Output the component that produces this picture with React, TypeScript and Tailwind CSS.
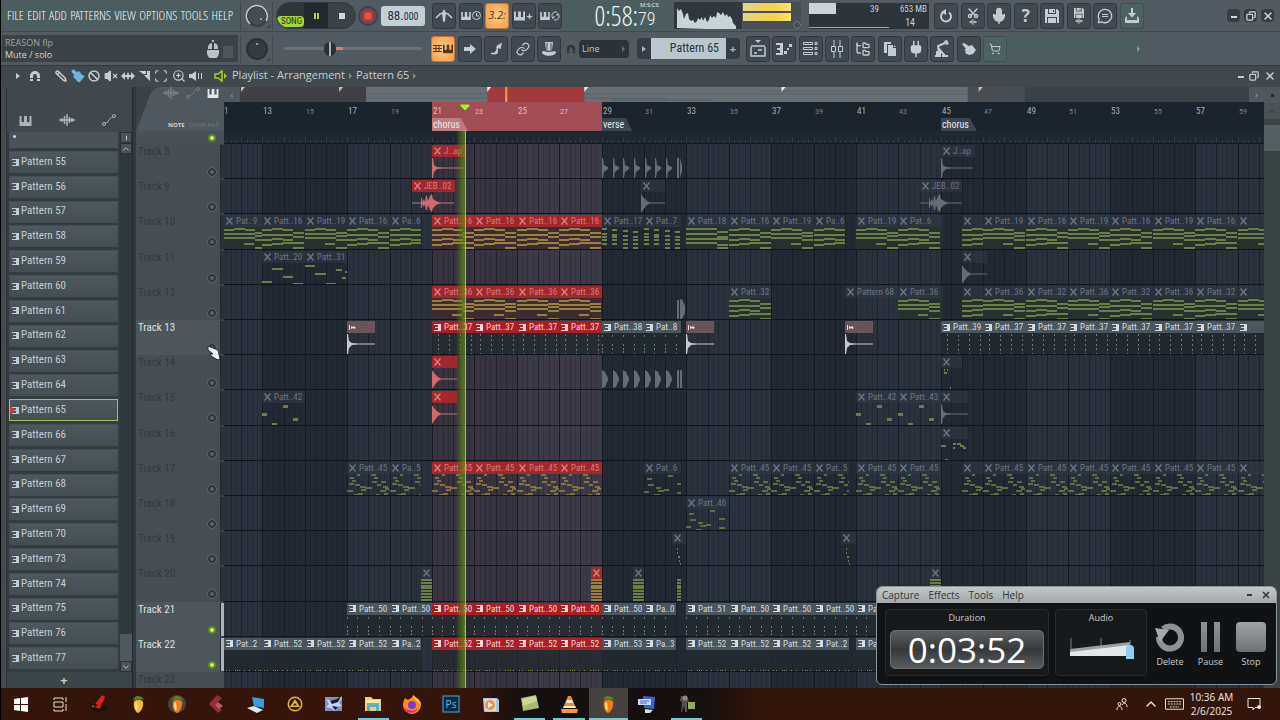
import type { ReactNode } from "react";
import clsx from "clsx";
import {
  Ban,
  ChevronUp,
  Copy,
  FolderTree,
  Link,
  MessageCircle,
  Mic,
  Paintbrush,
  Pencil,
  Plug,
  Scan,
  Scissors,
  ShoppingCart,
  VolumeX,
  X,
  ZoomIn,
} from "lucide-react";

const NARROW = "font-['Roboto_Condensed','Open_Sans',sans-serif]";
const LCD = "font-['Open_Sans_Condensed_Light','Roboto_Condensed','Open_Sans',sans-serif]";

// timeline scale: five bars take 106px, the canvas starts just after bar 11
const FIRST_BAR = 11;
const barX = (bar: number) => Math.round(((bar - FIRST_BAR) * 106) / 5 - 4);

type Note = [x: number, y: number, w: number];
type Art =
  | "chordA"
  | "chordB"
  | "chordLong"
  | "stutter"
  | "melodyA"
  | "melodyB"
  | "sparse"
  | "arp"
  | "arpThin"
  | "dots"
  | "dotsLate"
  | "ticks"
  | "stripes"
  | "kick"
  | "snare"
  | "burst"
  | "hits"
  | "bigHits"
  | "blob"
  | "fall"
  | "specks"
  | "curve"
  | "none";

interface ClipData {
  from: number;
  to: number;
  name: string;
  art: Art;
  red?: boolean;
  bare?: boolean;
  audio?: boolean;
}

const NOTES: Partial<Record<Art, Note[]>> = {
  chordA: [
    [0, 2, 10], [10, 1, 11], [21, 2, 10], [31, 5, 11],
    [0, 7, 31], [31, 9, 11],
    [0, 12, 10], [10, 11, 11], [21, 12, 10], [31, 15, 11],
    [0, 17, 10], [10, 16, 11], [20, 15, 22],
    [31, 20, 11],
  ],
  chordB: [
    [0, 2, 10], [10, 1, 11], [21, 2, 10], [31, 5, 11],
    [0, 6, 31], [31, 8, 11],
    [0, 10, 31], [31, 12, 11],
    [20, 16, 10], [31, 20, 11],
  ],
  chordLong: [
    [0, 1, 31], [31, 4, 11], [0, 6, 31], [31, 9, 11],
    [0, 11, 42], [0, 15, 31], [31, 17, 11], [31, 20, 11],
  ],
  stutter: [0, 10, 21, 31].flatMap((x, i): Note[] => [
    [x, 1 + i, 5], [x, 6 + i, 5], [x, 12, 5], [x, 16, 5], [x, i > 1 ? 20 : 9, 5],
  ]),
  melodyA: [[0, 18, 10], [10, 5, 11], [21, 13, 10], [31, 20, 10]],
  melodyB: [[0, 2, 10], [10, 10, 11], [21, 20, 10], [31, 6, 6], [37, 14, 4], [40, 8, 2]],
  sparse: [[0, 10, 5], [10, 20, 5], [21, 2, 5], [31, 15, 5]],
  arp: [
    [3, 3, 4], [10, 0, 3], [5, 6, 4], [2, 9, 5], [8, 10, 5], [0, 16, 6], [13, 12, 6],
    [14, 15, 5], [18, 13, 7], [11, 19, 5], [7, 20, 5], [24, 0, 5], [27, 3, 4], [25, 7, 5],
    [30, 10, 4], [34, 7, 5], [36, 12, 5], [33, 16, 6], [38, 14, 4], [29, 20, 4], [37, 19, 4],
  ],
  arpThin: [
    [3, 4, 5], [24, 1, 5], [4, 10, 6], [12, 13, 5], [33, 9, 6], [14, 16, 6], [20, 15, 5],
    [0, 17, 5], [33, 18, 6], [10, 20, 6],
  ],
  dots: [6, 17, 28, 39].flatMap((x, i): Note[] => [
    [x, 1 + (i % 2), 1], [x, 6, 1], [x, 11, 1], [x, 15 + (i % 2), 1], [x, 20, 1],
  ]),
  dotsLate: [0, 10, 21, 32].flatMap((x, i): Note[] => [
    [x, 2, 1], [x, 11, 1], [x, 15, 1], [x, i % 2 ? 20 : 18, 1],
  ]),
  ticks: [2, 5, 11, 13, 15, 20, 25, 31, 34, 36, 39].map((x): Note => [x, 20, 1]),
  stripes: [0, 3, 6, 8, 11, 14, 17, 20].map((y): Note => [0, y, 11]),
  fall: [[5, 4, 1], [5, 8, 1], [6, 12, 2], [7, 16, 1], [8, 19, 1], [8, 20, 1]],
  specks: [[3, 1, 1], [6, 1, 1], [3, 4, 3], [9, 19, 1]],
  curve: [[0, 6, 5], [12, 4, 3], [12, 8, 2], [16, 4, 4], [19, 6, 4], [22, 8, 3], [4, 20, 3]],
};

const SHAPES: Partial<Record<Art, string>> = {
  kick: "M0 1L1 1L2 8L5 10L11 10.500H32V11.500H11L5 12L2 15L1 21L0 21Z",
  snare: "M0 2L2 5L6 9L9 10.500H26V11.500H9L6 13L2 18L0 21Z",
  burst: "M0 10.500H9V6H10V10L12 7L13 10L14 4H15L16 9L18 4L20 2L21 7L24 9L28 10.500H42V11.500H28L24 13L21 16L20 20L18 18L16 13L15 18H14L13 12L12 15L10 12V16H9V11.500H0Z",
  blob: "M3 2L5 1L8 8L8 15L5 21L3 21ZM0 2H2V21H0Z",
  hits: [0, 11, 21, 32, 43, 53, 64]
    .map((x) => `M${x} 1H${x + 1}L${x + 2} 8L${x + 6} 10V12L${x + 2} 15L${x + 1} 21H${x}Z`)
    .join("")
    .concat("M75 1H77V21H75ZM78 1L80 9V14L78 21Z"),
  bigHits: [0, 11, 21, 32, 43, 53, 64]
    .map((x) => `M${x} 2L${x + 3} 4L${x + 6} 10V12L${x + 3} 19L${x} 20Z`)
    .join("")
    .concat("M75 2H77V20H75ZM78 2H80V20H78Z"),
};

const run = (from: number, names: string[], art: Art | Art[], red = false): ClipData[] =>
  names.map((name, i) => ({
    from: from + i * 2,
    to: from + i * 2 + 2,
    name,
    art: Array.isArray(art) ? art[i % art.length] : art,
    red,
  }));

const same = (name: string, count: number) => Array.from({ length: count }, () => name);
const clip = (from: number, to: number, name: string, art: Art, extra: Partial<ClipData> = {}): ClipData => ({
  from,
  to,
  name,
  art,
  ...extra,
});

interface Track {
  id: number;
  on?: boolean;
  led?: boolean;
  clips: ClipData[];
}

const TRACKS: Track[] = [
  {
    id: 8,
    clips: [
      clip(21, 22.6, "J..ap", "kick", { red: true }),
      clip(29, 32.8, "", "hits", { bare: true }),
      clip(45, 46.6, "J..ap", "kick"),
    ],
  },
  {
    id: 9,
    clips: [
      clip(20.05, 22.1, "JEB..02", "burst", { red: true }),
      clip(30.85, 32, "", "snare"),
      clip(44, 46, "JEB..02", "burst"),
    ],
  },
  {
    id: 10,
    clips: [
      clip(11.18, 13, "Pat..9", "chordB"),
      ...run(13, ["Patt..16", "Patt..19", "Patt..16"], ["chordA", "chordB"]),
      clip(19, 20.5, "Pa..6", "chordA"),
      ...run(21, same("Patt..16", 4), "chordA", true),
      clip(29, 31, "Patt..17", "stutter"),
      clip(31, 32.75, "Pat..7", "stutter"),
      clip(33, 35, "Patt..18", "chordLong"),
      ...run(35, ["Patt..16", "Patt..19"], ["chordA", "chordB"]),
      clip(39, 40.5, "Pa..6", "chordA"),
      clip(41, 43, "Patt..19", "chordB"),
      clip(43, 45.1, "Pat..6", "chordA"),
      clip(46, 47, "", "chordA"),
      ...run(47, ["Patt..19", "Patt..16", "Patt..19", "Patt..16", "Patt..19", "Patt..16"], ["chordB", "chordA"]),
      clip(59, 61, "", "chordB"),
    ],
  },
  {
    id: 11,
    clips: [
      clip(13, 15, "Patt..20", "melodyA"),
      clip(15, 17, "Patt..31", "melodyB"),
      clip(46, 47.2, "", "snare"),
    ],
  },
  {
    id: 12,
    clips: [
      ...run(21, same("Patt..36", 4), "chordB", true),
      clip(32.55, 33, "", "blob", { bare: true }),
      clip(35, 37, "Patt..32", "chordA"),
      clip(40.5, 43, "Pattern 68", "none"),
      clip(43, 45.1, "Patt..36", "chordB"),
      clip(46, 47, "", "chordA"),
      ...run(47, ["Patt..36", "Patt..32", "Patt..36", "Patt..32", "Patt..36", "Patt..32"], ["chordB", "chordA"]),
      clip(59, 61, "", "chordB"),
    ],
  },
  {
    id: 13,
    on: true,
    clips: [
      clip(17, 18.3, "", "kick", { audio: true }),
      ...run(21, same("Patt..37", 4), "dots", true),
      clip(29, 31, "Patt..38", "dotsLate"),
      clip(31, 32.75, "Pat..8", "dotsLate"),
      clip(33, 34.3, "", "kick", { audio: true }),
      clip(40.5, 41.8, "", "kick", { audio: true }),
      ...run(45, ["Patt..39", ...same("Patt..37", 6)], "dots"),
      clip(59, 61, "", "dots"),
    ],
  },
  {
    id: 14,
    clips: [
      clip(21, 22.2, "", "snare", { red: true }),
      clip(29, 32.8, "", "bigHits", { bare: true }),
      clip(45, 46, "", "specks"),
    ],
  },
  {
    id: 15,
    clips: [
      clip(13, 15, "Patt..42", "sparse"),
      clip(21, 22.2, "", "snare", { red: true }),
      ...run(41, ["Patt..42", "Patt..43"], "sparse"),
      clip(45, 46.3, "", "kick"),
    ],
  },
  { id: 16, clips: [clip(45, 46.3, "", "curve")] },
  {
    id: 17,
    clips: [
      clip(17, 19, "Patt..45", "arp"),
      clip(19, 20.5, "Pa..5", "arp"),
      ...run(21, same("Patt..45", 4), "arp", true),
      clip(31, 32.75, "Pat..6", "arpThin"),
      ...run(35, same("Patt..45", 2), "arp"),
      clip(39, 40.65, "Pat..5", "arp"),
      ...run(41, same("Patt..45", 2), "arp"),
      clip(46, 47, "", "arp"),
      ...run(47, same("Patt..45", 6), "arp"),
      clip(59, 61, "", "arp"),
    ],
  },
  { id: 18, clips: [clip(33, 35, "Patt..46", "arpThin")] },
  { id: 19, clips: [clip(32.3, 33, "", "fall"), clip(40.3, 41, "", "fall")] },
  {
    id: 20,
    clips: [
      clip(20.5, 21, "", "stripes"),
      clip(28.5, 29, "", "stripes", { red: true }),
      clip(30.5, 31, "", "stripes"),
      clip(32.55, 32.75, "", "stripes", { bare: true }),
      clip(44.5, 45, "", "stripes"),
    ],
  },
  {
    id: 21,
    on: true,
    led: true,
    clips: [
      ...run(17, same("Patt..50", 2), "dotsLate"),
      ...run(21, same("Patt..50", 4), "dotsLate", true),
      clip(29, 31, "Patt..50", "dotsLate"),
      clip(31, 32.5, "Pa..0", "dotsLate"),
      ...run(33, ["Patt..51", ...same("Patt..50", 4)], "dotsLate"),
    ],
  },
  {
    id: 22,
    on: true,
    led: true,
    clips: [
      clip(11.18, 13, "Pat..2", "ticks"),
      ...run(13, same("Patt..52", 3), "ticks"),
      clip(19, 20.5, "Pa..2", "ticks"),
      ...run(21, same("Patt..52", 4), "ticks", true),
      clip(29, 31, "Patt..53", "ticks"),
      clip(31, 32.5, "Pa..3", "ticks"),
      ...run(33, same("Patt..52", 3), "ticks"),
      clip(39, 40.65, "Pat..2", "ticks"),
      clip(41, 43, "Patt..52", "ticks"),
    ],
  },
];

const PATTERNS = [55, 56, 57, 58, 59, 60, 61, 62, 63, 64, 65, 66, 67, 68, 69, 70, 73, 74, 75, 76, 77];

function PianoIcon({ className = "h-2.5 w-3" }: { className?: string }) {
  return (
    <svg viewBox="0 0 12 10" className={className} fill="currentColor" aria-hidden>
      <path d="M0 0h2v6h2.500V0h3v6H10V0h2v10H0z" />
    </svg>
  );
}

function MagnetIcon({ className }: { className?: string }) {
  return (
    <svg viewBox="0 0 12 12" className={clsx("shrink-0", className)} fill="none" stroke="currentColor" strokeWidth="3" aria-hidden>
      <path d="M2.500 8V6a3.500 3.500 0 0 1 7 0v2" />
      <path d="M2.500 9v2M9.500 9v2" />
    </svg>
  );
}

function WaveIcon({ className = "h-3 w-4" }: { className?: string }) {
  return (
    <svg viewBox="0 0 16 12" className={className} stroke="currentColor" strokeWidth="1.500" aria-hidden>
      <path d="M0 6h16M3 4v4M5.500 2v8M8 0v12M10.500 3v6M13 4v4" fill="none" />
    </svg>
  );
}

function AutomationIcon() {
  return (
    <svg viewBox="0 0 14 12" className="h-3 w-3.5" fill="none" stroke="currentColor" aria-hidden>
      <path d="M3 9c3 0 3-2 4-3s2-3 4-3" />
      <circle cx="2" cy="10" r="1.500" />
      <circle cx="12" cy="2" r="1.500" />
    </svg>
  );
}

function StepIcon() {
  return (
    <svg viewBox="0 0 7 7" className="size-[7px] shrink-0" fill="currentColor" aria-hidden>
      <path d="M0 0h7v7H0V6h4V4H1V3h3V1H0z" />
    </svg>
  );
}

function MutedIcon() {
  return (
    <svg viewBox="0 0 7 8" className="h-2 w-[7px] shrink-0" fill="none" stroke="currentColor" strokeWidth="1.500" aria-hidden>
      <path d="M.5.5l6 7M6.500.5l-6 7" />
    </svg>
  );
}

function SpeakerIcon({ className }: { className?: string }) {
  return (
    <svg viewBox="0 0 14 12" className={clsx("h-3 w-3.5", className)} fill="none" stroke="currentColor" strokeWidth="1.500" aria-hidden>
      <path d="M1 4h3l4-3v10L4 8H1z" />
      <path d="M10 3l3 3-3 3z" fill="currentColor" stroke="none" />
    </svg>
  );
}

function SaveGlyph({ className }: { className: string }) {
  return (
    <svg viewBox="0 0 14 14" className={className} fill="currentColor" aria-hidden>
      <path fillRule="evenodd" d="M0 0h3v5h8V0h1l2 2v12h-2V8H2v6H0zM4 0h6v4H4zM8 1v2h1V1zM3 9h8v5H3z" />
    </svg>
  );
}

function WindowGlyph({ label }: { label: string }) {
  if (label === "Minimize") return <span className="mt-0.5 block h-0.5 w-1.5 bg-current" />;
  if (label === "Restore") return <Copy className="size-2.5 -scale-x-100" strokeWidth={3} />;
  return <X className="size-3" strokeWidth={3} />;
}

function ToolButton({ label, tone = "dark", children }: { label: string; tone?: "dark" | "amber" | "teal"; children: ReactNode }) {
  return (
    <button
      type="button"
      aria-label={label}
      className={clsx(
        "flex h-[26px] w-6 shrink-0 items-center justify-center gap-px rounded-[3px] border",
        tone === "dark" && "border-[#30373e] bg-[#404850] text-[#c3ccd2]",
        tone === "amber" && "border-[#c07a35] bg-[radial-gradient(#ffcd8a,#f59c45)] text-[#5b3410]",
        tone === "teal" && "border-[#3f4e50] bg-[#4d6264] text-[#c3ccd2]",
      )}
    >
      {children}
    </button>
  );
}

function Knob({ lit }: { lit?: boolean }) {
  return (
    <svg viewBox="0 0 28 28" className="size-7" aria-hidden>
      <circle cx="14" cy="14" r="10" fill={lit ? "#454c53" : "#353b41"} stroke={lit ? "#363d43" : "#2a3036"} strokeWidth="2" />
      {lit && <path d="M7 22A10.500 10.500 0 1 1 23 19" fill="none" stroke="#c3ccd1" strokeWidth="1.500" />}
      <circle cx={lit ? 18 : 14} cy={lit ? 17 : 9} r="1" fill="#aab3b8" />
      <path d="M24 25h3v-2" fill="none" stroke="#343b41" />
    </svg>
  );
}

function TransportRow() {
  return (
    <div className="flex h-8 items-center border-b border-[#424950]">
      <nav className={clsx(LCD, "mr-0.5 ml-px flex h-[27px] w-[236px] shrink-0 items-center justify-between bg-[#4b5d5f] px-[5px] text-[13px] text-[#f0f6f6]")}>
        {["FILE", "EDIT", "ADD", "PATTERNS", "VIEW", "OPTIONS", "TOOLS", "HELP"].map((item) => (
          <button key={item} type="button">
            {item}
          </button>
        ))}
      </nav>
      <div className="flex w-[33px] shrink-0 justify-center border-x border-[#424950]">
        <Knob lit />
      </div>
      <div className="ml-[3px] flex h-[27px] w-20 shrink-0 overflow-hidden rounded-full border border-[#33393f] bg-[#3a4147]">
        <button type="button" className="flex w-[27px] flex-col justify-end bg-[#30373c]">
          <span className={clsx(NARROW, "mb-px rounded-sm bg-[#a5d63a] pl-0.5 text-center text-[9px] leading-[11px] text-[#22300a]")}>SONG</span>
        </button>
        <button type="button" aria-label="Pause playback" className="flex w-6 items-center justify-center gap-px bg-[#23292e]">
          <span className="h-1.5 w-0.5 bg-[#a5d63a]" />
          <span className="h-1.5 w-0.5 bg-[#a5d63a]" />
        </button>
        <button type="button" aria-label="Stop playback" className="flex flex-1 items-center justify-center">
          <span className="size-1.5 bg-[#d1d8dc]" />
        </button>
      </div>
      <button type="button" aria-label="Record" className="ml-0.5 flex size-5 shrink-0 items-center justify-center rounded-full border-2 border-[#3b4248] bg-[#79484d]">
        <span className="size-2 rounded-full bg-[#ee4a4c]" />
      </button>
      <div className={clsx(NARROW, "ml-[3px] flex h-5 w-[44px] shrink-0 items-baseline justify-center rounded-[3px] bg-[#c3cfd7] text-[13px] leading-5 text-[#2b3337]")}>
        88.<span className="text-[10px]">000</span>
      </div>
      <div className="ml-[7px] flex w-[130px] shrink-0 justify-between">
        <ToolButton label="Metronome">
          <svg viewBox="0 0 18 14" className="h-3.5 w-[18px]" fill="none" stroke="currentColor" strokeWidth="1.500">
            <path d="M1 9l4-4 3-1M17 9l-4-4-3-1M9 3v10" />
            <path d="M9 0l2 4-1 8H8L7 4z" fill="currentColor" stroke="none" />
          </svg>
        </ToolButton>
        <ToolButton label="Wait for input">
          <PianoIcon className="h-2 w-2.5" />
          <svg viewBox="0 0 9 9" className="size-[9px]" fill="none" stroke="currentColor">
            <circle cx="4.500" cy="4.500" r="4" />
            <path d="M4.500 2v3H7" />
          </svg>
        </ToolButton>
        <ToolButton label="Countdown" tone="amber">
          <span className="font-['Open_Sans',sans-serif] text-[11px] italic">3.2:</span>
        </ToolButton>
        <ToolButton label="Overdub">
          <PianoIcon className="h-2.5 w-[11px]" />
          <span className="text-[11px] leading-none font-bold">+</span>
        </ToolButton>
        <ToolButton label="Loop record">
          <PianoIcon className="h-2 w-2.5" />
          <svg viewBox="0 0 9 10" className="h-2.5 w-[9px]" fill="none" stroke="currentColor">
            <path d="M6 1H4a3.500 3.500 0 0 0-2 6M3 9h2a3.500 3.500 0 0 0 2-6M1 7h2v-2M8 3H6v2" />
          </svg>
        </ToolButton>
      </div>
      <div className={clsx(LCD, "ml-1 flex h-[27px] w-[103px] shrink-0 items-center justify-end bg-[#4b5d5f] pr-[3px] text-[#e6f3f4]")}>
        <span className="text-[27px] leading-[27px]">0:58:</span>
        <span className="flex w-7 flex-col items-start">
          <span className="pl-0.5 font-['Open_Sans',sans-serif] text-[6px] leading-[6px]">M:S:CS</span>
          <span className={clsx(NARROW, "text-[18px] leading-[21px] font-light")}>79</span>
        </span>
      </div>
      <svg viewBox="0 0 68 27" className="ml-[5px] h-[27px] w-[68px] shrink-0 bg-[#30373d]" aria-hidden>
        <path
          d="M3 26V6l2 3 2-2 2 5 1 5 2-5 2-1 1 6 2 2 2-1 2 3 2-2 1-3 2 2 2-3 1 4 2-4 2 5 2-2 1-5 2 3 2-2 2 2 1-6 2 1 2 2 2-3 2 4 2-2 1 3 2-1 2 3 1 4 3 3v4z"
          fill="#c9d3da"
        />
      </svg>
      <div className="relative ml-px flex h-[27px] w-[58px] shrink-0 flex-col gap-0.5 bg-[#474e55]">
        <span className="mt-px h-2 w-12 bg-[linear-gradient(90deg,#e0d58d,#f1d04a_60%,#fbe36a)]" />
        <span className="h-2 w-12 bg-[linear-gradient(90deg,#e0d58d,#f1d04a_60%,#fbe36a)]" />
        <span className="absolute right-0 bottom-0 size-2 rounded-full border border-[#6f7980]" />
      </div>
      <div className={clsx(NARROW, "ml-2 flex h-[26px] w-[120px] shrink-0 justify-between bg-[#2e353a] pr-0.5 text-[9px] leading-[13px] text-[#c5cfd4]")}>
        <span className="flex h-full w-10 flex-col justify-between">
          <span className="h-[11px] w-[27px] bg-[#c9d3d9]" />
          <span className="mb-px h-px w-20 bg-[#9aa4a9]" />
        </span>
        <span>39</span>
        <span className="flex flex-col text-right">
          <span>653 MB</span>
          <span className="pr-3 text-[10px]">14</span>
        </span>
      </div>
      <div className="ml-[5px] flex w-[210px] shrink-0 justify-between">
        <ToolButton label="Undo">
          <svg viewBox="0 0 14 14" className="size-3.5" fill="none" stroke="currentColor" strokeWidth="2">
            <path d="M4 3.500a5 5 0 1 0 6 0" />
            <path d="M7 0L2 3l5 3z" fill="currentColor" stroke="none" />
          </svg>
        </ToolButton>
        <ToolButton label="Cut">
          <span className="flex flex-col items-center">
            <Scissors className="size-3 -rotate-90" strokeWidth={3} />
            <WaveIcon className="h-1.5 w-3" />
          </span>
        </ToolButton>
        <ToolButton label="Record audio">
          <Mic className="size-[18px] fill-current" />
        </ToolButton>
        <ToolButton label="Help">
          <span className="font-['Open_Sans',sans-serif] text-[17px] leading-none font-bold">?</span>
        </ToolButton>
        <ToolButton label="Save">
          <SaveGlyph className="size-3.5" />
        </ToolButton>
        <ToolButton label="Save new version">
          <span className="flex flex-col items-center">
            <SaveGlyph className="size-2.5" />
            <WaveIcon className="h-1.5 w-3" />
          </span>
        </ToolButton>
        <ToolButton label="Feedback">
          <span className="relative flex items-center justify-center">
            <MessageCircle className="size-4" />
            <span className="absolute h-[3px] w-1.5 border-y border-current" />
          </span>
        </ToolButton>
        <ToolButton label="Download" tone="teal">
          <svg viewBox="0 0 16 16" className="size-4" fill="currentColor">
            <path d="M7 0h2v5h3L8 9.500 4 5h3zM1 10l2-2v4h10V8l2 2v5H1z" />
          </svg>
        </ToolButton>
      </div>
      <div className="mr-[6px] ml-auto flex gap-1">
        {["Minimize", "Restore", "Close"].map((label) => (
          <button
            key={label}
            type="button"
            aria-label={label}
            className="flex size-[13px] items-center justify-center rounded-sm bg-[#363d44] text-[#cfd7db]"
          >
            <WindowGlyph label={label} />
          </button>
        ))}
      </div>
    </div>
  );
}

function PanelRow() {
  return (
    <div className="flex h-[33px] items-center">
      <div className="mr-0.5 ml-px flex h-[27px] w-[236px] shrink-0 items-center justify-between bg-[#3a4246] px-[3px] font-['Open_Sans',sans-serif] text-[9px] leading-[12px]">
        <div>
          <p className="text-[#9ba7ab]">REASON flp</p>
          <p className="text-[#cfd9dc]">Mute / solo</p>
        </div>
        <div className="flex items-end gap-1 pr-0.5">
          <svg viewBox="0 0 12 18" className="h-[18px] w-3" fill="#b9c3c7" aria-hidden>
            <path d="M1 8a5 5 0 0 1 4-5V9H1zM7 3a5 5 0 0 1 4 5v1H7zM0 10h12v3a5 5 0 0 1-12 0zM5 0h2v2H5z" />
          </svg>
          <span className="h-3 w-2.5 bg-[#4e565b]" />
        </div>
      </div>
      <div className="flex w-[33px] shrink-0 justify-center border-x border-[#424950]">
        <Knob />
      </div>
      <div className="ml-[11px] flex w-[138px] shrink-0 items-center">
        <input
          type="range"
          aria-label="Master pitch"
          defaultValue={32}
          className="h-[3px] w-full appearance-none rounded-full bg-[linear-gradient(90deg,#6a7278_0_38%,#e07b76_38%_43%,#6a7278_43%)] [&::-webkit-slider-thumb]:h-3.5 [&::-webkit-slider-thumb]:w-3 [&::-webkit-slider-thumb]:appearance-none [&::-webkit-slider-thumb]:rounded-full [&::-webkit-slider-thumb]:bg-[linear-gradient(90deg,#2b3035_0_5px,#aab0b4_5px_7px,#2b3035_7px)]"
        />
      </div>
      <div className="ml-[9px] flex w-[130px] shrink-0 justify-between">
        <ToolButton label="Typing keyboard" tone="amber">
          <svg viewBox="0 0 9 10" className="h-2.5 w-[9px]" fill="none" stroke="currentColor">
            <path d="M0 1.500h9M0 4.500h9M0 7.500h9M3 1v7M6 1v7" />
          </svg>
          <PianoIcon className="h-2.5 w-2.5" />
        </ToolButton>
        <ToolButton label="Step mode">
          <svg viewBox="0 0 12 10" className="h-2.5 w-3" fill="currentColor">
            <path d="M0 3h6V0l6 5-6 5V7H0z" />
          </svg>
        </ToolButton>
        <ToolButton label="Slide">
          <svg viewBox="0 0 12 12" className="size-3" fill="none" stroke="currentColor" strokeWidth="1.500">
            <path d="M9 2c-3 1 0 5-4 8M1 10.500h3" />
            <path d="M7 4l4-3-1 4zM4 11l3-3v2z" fill="currentColor" />
          </svg>
        </ToolButton>
        <ToolButton label="Link">
          <Link className="size-3.5" />
        </ToolButton>
        <ToolButton label="Hat">
          <svg viewBox="0 0 16 16" className="size-4" fill="currentColor">
            <path d="M4 1h8l-1 8c-2 1-4 1-6 0zM1 11c2-2 2 0 7 0s5-2 7 0c0 5-14 5-14 0z" />
            <path d="M6 2v7M10 2v7" stroke="#404850" />
          </svg>
        </ToolButton>
      </div>
      <MagnetIcon className="ml-[5px] size-2.5 text-[#2b3238]" />
      <div className="relative ml-[3px] shrink-0">
        <select
          aria-label="Snap"
          className="block h-[18px] w-[50px] appearance-none rounded-sm bg-[#2c3339] pl-[3px] font-['Open_Sans',sans-serif] text-[9px] leading-[18px] text-[#bcc6cb]"
        >
          <option>Line</option>
        </select>
        <span className="absolute top-1.5 right-1 border-y-[3px] border-l-[3px] border-y-transparent border-l-[#69737a]" />
      </div>
      <div className="ml-2 flex h-[21px] w-[103px] shrink-0">
        <button type="button" aria-label="Previous pattern" className="flex w-[14px] items-center justify-center rounded-l-sm bg-[#353c43]">
          <span className="border-y-[3px] border-l-[4px] border-y-transparent border-l-[#aab4b9]" />
        </button>
        <button
          type="button"
          className={clsx(NARROW, "flex-1 bg-[#b9c6ce] pr-[7px] text-right text-[12px] leading-[21px] whitespace-nowrap text-[#2a3338]")}
        >
          Pattern 65
        </button>
        <button type="button" aria-label="Add pattern" className="w-[14px] rounded-r-sm bg-[#353c43] text-[11px] leading-none font-bold text-[#aab4b9]">
          +
        </button>
      </div>
      <div className="ml-[6px] flex w-[261px] shrink-0 justify-between">
        <ToolButton label="View playlist">
          <svg viewBox="0 0 16 18" className="h-[18px] w-4" fill="none" stroke="currentColor" strokeWidth="1.500">
            <path d="M1 7v9h14V7M1 6h14M4 13h3M8 10h4" />
            <path d="M5 0h6L8 3z" fill="currentColor" stroke="none" />
          </svg>
        </ToolButton>
        <ToolButton label="View piano roll">
          <svg viewBox="0 0 16 12" className="h-3 w-4" fill="currentColor">
            <path d="M0 0h7v12H0v-2h4V7H1V5h3V2H0zM8 8h3v3H8zM11 5h2v2h-2zM13 1h3v3h-3z" />
          </svg>
        </ToolButton>
        <ToolButton label="View channel rack">
          <svg viewBox="0 0 15 16" className="h-4 w-[15px]" fill="none" stroke="currentColor">
            <path d="M.5 1.500h9v2h-9zM.5 6.500h9v2h-9zM.5 11.500h9v2h-9zM12 1.500h2v2h-2zM12 6.500h2v2h-2zM12 11.500h2v2h-2z" />
          </svg>
        </ToolButton>
        <ToolButton label="View mixer">
          <svg viewBox="0 0 12 18" className="h-[18px] w-3" fill="none" stroke="currentColor">
            <path d="M3 0v6M9 0v6M.5 6.500h4v5h-4zM7.500 6.500h4v5h-4zM3 12v6M9 12v6" />
          </svg>
        </ToolButton>
        <ToolButton label="View browser">
          <FolderTree className="size-4" />
        </ToolButton>
        <ToolButton label="Project files">
          <svg viewBox="0 0 12 14" className="h-3.5 w-3" fill="currentColor">
            <path d="M0 0h7v2H3v9H0zM4 3h5v3h3v8H4zM10 3l2 2h-2z" />
          </svg>
        </ToolButton>
        <ToolButton label="Plugins">
          <Plug className="size-[18px] fill-current" />
        </ToolButton>
        <ToolButton label="Performance">
          <svg viewBox="0 0 16 18" className="h-[18px] w-4" fill="none" stroke="currentColor" strokeWidth="2">
            <path d="M11 3L4 6l1 6M5 9l6 7M8 16h6M1 16h6" />
            <path d="M10 1l3-1 2 4-3 1zM2 11h5v5H2z" fill="currentColor" stroke="none" />
          </svg>
        </ToolButton>
        <ToolButton label="Touch controllers">
          <svg viewBox="0 0 14 12" className="h-3 w-3.5" fill="currentColor">
            <path d="M0 1l2-1 5 3 3-1 4 5-3 4-4 1-4-2 1-2-2-1 2-1z" />
          </svg>
        </ToolButton>
        <ToolButton label="Shop" tone="teal">
          <ShoppingCart className="size-3" />
        </ToolButton>
      </div>
      <div className="ml-[3px] flex h-[27px] w-[134px] shrink-0 items-center justify-end bg-[#4b5d5f] pr-1">
        <span className="border-y-[3px] border-l-[3px] border-y-transparent border-l-[#8b9a9d]" />
      </div>
    </div>
  );
}

function PlaylistTitle() {
  return (
    <div className="flex h-[22px] items-center border-t border-[#33393d] bg-[#40484d] pr-1 pb-0.5 pl-[15px] text-[#c4cdd1]">
      <span className="border-y-[3px] border-l-[4px] border-y-transparent border-l-current" />
      <button type="button" aria-label="Snap" className="ml-[9px]">
        <MagnetIcon className="size-3" />
      </button>
      <div className="ml-[14px] flex w-[148px] items-center justify-between">
        <button type="button" aria-label="Draw">
          <Pencil className="size-3 -scale-x-100" strokeWidth={3} />
        </button>
        <button type="button" aria-label="Paint" className="text-[#6fb4dd]">
          <Paintbrush className="size-3.5 -scale-x-100 fill-current" />
        </button>
        <button type="button" aria-label="Delete clips">
          <Ban className="size-3" strokeWidth={3} />
        </button>
        <button type="button" aria-label="Mute clips">
          <VolumeX className="size-3.5 fill-current" />
        </button>
        <button type="button" aria-label="Slip">
          <svg viewBox="0 0 14 10" className="h-2.5 w-3.5" fill="currentColor">
            <path d="M0 5l4-4v3h2V1l1 2 1-2v3h2V1l4 4-4 4V6H8v3L7 7 6 9V6H4v3z" />
          </svg>
        </button>
        <button type="button" aria-label="Slice">
          <svg viewBox="0 0 12 12" className="size-3" fill="currentColor">
            <path d="M0 1h7v3H4zM8 1h3v10L5 5h3z" />
          </svg>
        </button>
        <button type="button" aria-label="Select">
          <Scan className="size-3.5" />
        </button>
        <button type="button" aria-label="Zoom">
          <ZoomIn className="size-3.5" />
        </button>
        <button type="button" aria-label="Playback">
          <svg viewBox="0 0 14 12" className="h-3 w-3.5" fill="currentColor">
            <path d="M0 4h3l4-3v10L3 8H0zM9 3h1v6H9zM12 3h1v6h-1z" />
          </svg>
        </button>
      </div>
      <SpeakerIcon className="ml-[11px] text-[#9fd02f]" />
      <h1 className="ml-1 flex items-center gap-1 font-['Open_Sans',sans-serif] text-[11px] whitespace-nowrap">
        Playlist - Arrangement
        <span className="border-y-[3px] border-l-[3px] border-y-transparent border-l-[#7c868b]" />
        Pattern 65
        <span className="border-y-[3px] border-l-[3px] border-y-transparent border-l-[#7c868b]" />
      </h1>
      <div className="ml-auto flex w-[38px] items-center justify-between">
        {["Minimize", "Restore", "Close"].map((label) => (
          <button key={label} type="button" aria-label={`${label} playlist`}>
            <WindowGlyph label={label} />
          </button>
        ))}
      </div>
    </div>
  );
}

function PatternPicker() {
  return (
    <aside className="flex w-[126px] shrink-0 flex-col border-r border-[#262d30] bg-[#3b4448] text-[#c3cdd1]">
      <div className="flex h-[45px] items-end gap-[27px] bg-[#40484d] pb-1.5 pl-3 text-[#aab4b8]">
        <PianoIcon className="h-2.5 w-[13px]" />
        <WaveIcon />
        <AutomationIcon />
      </div>
      <div className="flex h-[540px]">
        <ul className={clsx(NARROW, "flex flex-1 flex-col bg-[#333c40] pr-0.5 pl-0.5 text-[11px]")}>
          <li className="mb-[3px] flex h-4 shrink-0 items-start bg-[#495359] pt-[3px] pl-1">
            <span className="size-[3px] rounded-full bg-[#d7dfe2]" />
          </li>
          {PATTERNS.map((number) => (
            <li key={number} className="flex min-h-0 flex-1 items-start">
              <button
                type="button"
                className={clsx(
                  "relative flex h-[22px] w-full items-center gap-0.5 border bg-[linear-gradient(#4d575d,#444e53)] pl-[2px]",
                  number === 65 ? "border-[#9cc05a]" : "border-[#434d52]",
                )}
              >
                {number === 65 && (
                  <span className="absolute top-1.5 left-0 border-y-4 border-l-[5px] border-y-transparent border-l-[#d8343f]" />
                )}
                <StepIcon />
                Pattern {number}
              </button>
            </li>
          ))}
        </ul>
        <div className="flex w-3 flex-col justify-between bg-[#2f383c]">
          <div>
            <button type="button" aria-label="Picker options" className="flex h-[11px] w-full items-center justify-center border border-[#2b3236] bg-[#4b545a]">
              <span className="h-1 w-px bg-current" />
            </button>
            <button type="button" aria-label="Scroll up" className="block h-[11px] w-full border border-[#2b3236] bg-[#4b545a]">
              <ChevronUp className="size-2.5" />
            </button>
          </div>
          <div>
            <div className="h-[27px] bg-[#4f585e]" />
            <button type="button" aria-label="Scroll down" className="block h-[11px] w-full border border-[#2b3236] bg-[#4b545a]">
              <ChevronUp className="size-2.5 rotate-180" />
            </button>
          </div>
        </div>
      </div>
      <button type="button" className="h-4 w-[114px] text-center text-[13px] leading-4 font-bold">
        +
      </button>
    </aside>
  );
}

function Led({ on, className }: { on?: boolean; className?: string }) {
  return (
    <span
      className={clsx(
        "size-2 rounded-full border-2",
        on ? "border-[#5f8a22] bg-[#c9f08a]" : "border-[#2f363b] bg-[#59626a] outline-1 outline-[#5a636a]",
        className,
      )}
    />
  );
}

function TrackHeaders() {
  return (
    <div className={clsx(NARROW, "flex w-[88px] shrink-0 flex-col bg-[#3b4247] text-[11px]")}>
      <div className="relative h-11">
        <svg viewBox="0 0 88 44" className="absolute inset-0 h-full w-full" preserveAspectRatio="none" aria-hidden>
          <path d="M0 44L14 8Q18 0 26 0H88V44Z" fill="#50585f" />
        </svg>
        <div className="relative flex h-full flex-col justify-between pb-0.5 pl-[27px] text-[#787f85]">
          <div className="flex items-center gap-[7px]">
            <WaveIcon />
            <AutomationIcon />
            <PianoIcon className="h-[9px] w-3 text-[#e0e6e9]" />
          </div>
          <p className="flex gap-1 pl-[5px] font-['Open_Sans',sans-serif] text-[6px] leading-[8px] font-bold">
            <span className="text-[#d3dadd]">NOTE</span>
            <span className="text-[#666e74]">CHAN PAT</span>
          </p>
        </div>
      </div>
      <div className="flex h-[13px] items-center justify-end bg-[#4a5258] pr-2">
        <Led on />
      </div>
      <div className="flex h-[528px] flex-col">
        {TRACKS.map((track) => (
          <div key={track.id} className="flex flex-1">
            <div
              className={clsx(
                "flex flex-1 items-start justify-between pl-0.5 leading-[15px]",
                track.on ? "bg-[#4e565c] text-[#d9e1e4]" : "bg-[#464e53] text-[#31393f]",
              )}
            >
              Track {track.id}
              <Led on={track.led} className="mt-6 mr-1" />
            </div>
            <span className={clsx("my-px w-1 border-l border-[#242a30]", track.led ? "bg-[#aab4ba]" : "bg-[#2a3138]")} />
          </div>
        ))}
      </div>
      <div className="h-4 bg-[#464e53] pl-0.5 leading-4 text-[#31393f]">Track 23</div>
    </div>
  );
}

function ClipBody({ clip: data, muted }: { clip: ClipData; muted: boolean }) {
  const notes = NOTES[data.art];
  const shape = SHAPES[data.art];
  const isDot = data.art.startsWith("dots");
  const isTick = data.art === "ticks";
  const isChord = data.art.startsWith("chord") || data.art === "stripes";
  const noteColor = isDot ? "#6d7974" : data.red ? (isTick ? "#8a8a45" : "#9a7f3f") : isTick ? "#7e8b64" : "#6b7e48";
  const waveColor = data.red ? "#cf6a6e" : muted ? "#646d77" : "#c3c9cf";

  return (
    <svg
      className={clsx(
        "block min-h-0 w-full flex-1",
        isChord && (data.red ? "bg-[#3b2d2f]" : "bg-[#26312f]"),
        !muted && !data.audio && "bg-[#20292d]/80",
      )}
      shapeRendering={notes ? "crispEdges" : "auto"}
      aria-hidden
    >
      {shape && <path d={shape} fill={waveColor} />}
      {notes?.map(([x, y, w], i) => (
        <rect
          key={i}
          x={x}
          y={y}
          width={w}
          height={data.art === "sparse" ? 3 : 2}
          fill={noteColor}
          fillOpacity={data.art.startsWith("arp") ? 0.8 : 1}
        />
      ))}
    </svg>
  );
}

function Clip({ clip: data, muted }: { clip: ClipData; muted: boolean }) {
  const left = barX(data.from);
  const headTone = data.audio
    ? "bg-[#6b5457] text-[#e6dede]"
    : data.red
      ? muted
        ? "bg-[#a2282d] text-[#d67c7e]"
        : "bg-[#a81f26] text-[#f6d6d6]"
      : muted
        ? "bg-[#303844]/60 text-[#6c7580]"
        : "bg-[#4b555d] text-[#d3dbdf]";

  return (
    <div className="absolute top-px bottom-0 flex flex-col overflow-hidden" style={{ left, width: barX(data.to) - left }}>
      <div
        className={clsx(
          NARROW,
          "flex h-3 shrink-0 items-center gap-[3px] pl-0.5 text-[9px] leading-3 whitespace-nowrap",
          data.bare ? "opacity-0" : headTone,
        )}
      >
        {data.audio ? (
          <svg viewBox="0 0 7 7" className="size-[7px]" fill="currentColor">
            <path d="M0 1h1v5H0zM2 2l2 1 1-1 2 2-2 1-1-1-2 1z" />
          </svg>
        ) : muted ? (
          <MutedIcon />
        ) : (
          <StepIcon />
        )}
        {data.name}
      </div>
      <ClipBody clip={data} muted={muted} />
    </div>
  );
}

// shaded four-bar groups plus beat and bar lines
function Grid() {
  const bars = Array.from({ length: 120 }, (_, i) => FIRST_BAR + i);
  return (
    <svg className="absolute inset-0 h-full w-full bg-[#29313c]" shapeRendering="crispEdges" aria-hidden>
      {bars
        .filter((bar) => bar % 8 === 5)
        .map((bar) => (
          <rect key={bar} x={barX(bar)} width={barX(bar + 4) - barX(bar)} height="100%" fill="#222933" />
        ))}
      <rect x={barX(21)} width={barX(29) - barX(21)} height="100%" fill="#c87c90" fillOpacity="0.13" />
      {bars.map((bar) => (
        <g key={bar} fill="#10161f">
          <rect x={barX(bar)} width="1" height="100%" fillOpacity={bar % 2 ? 0.85 : 0.6} />
          <rect x={barX(bar + 0.25)} width="1" height="100%" fillOpacity="0.22" />
          <rect x={barX(bar + 0.5)} width="1" height="100%" fillOpacity="0.35" />
          <rect x={barX(bar + 0.75)} width="1" height="100%" fillOpacity="0.22" />
        </g>
      ))}
    </svg>
  );
}

function Minimap() {
  return (
    <div className="flex h-[15px] bg-[#3d444b]">
      <button type="button" aria-label="Scroll left" className="w-4 shrink-0 bg-[#50585f] text-[9px] leading-none text-[#9aa3a8]">
        ‹
      </button>
      <svg viewBox="0 0 1008 15" className="h-full min-w-0 flex-1" preserveAspectRatio="none" aria-hidden>
        <path d="M0 0h1008v15H0z" fill="#3a4148" />
        <path d="M0 0h126v15H0z" fill="#3e4046" />
        <path d="M727 0h57v15h-57z" fill="#4a4f56" />
        <path d="M126 0h601v15H126z" fill="#667075" />
        <path d="M126 7h601M126 11h300M520 4h207M370 13h100" stroke="#566066" />
        <path d="M247 0h97v15h-97z" fill="#a23a3d" />
        <path d="M265 0h2v15h-2z" fill="#f0a04c" />
        <path d="M1 0h4l-4 5zM99 0h4l-4 5zM738 0h4l-4 5z" fill="#f0b377" />
        <path d="M247 0h4l-4 5zM344 0h4l-4 5zM541 0h4l-4 5z" fill="#f2efd6" />
      </svg>
      <button type="button" aria-label="Scroll right" className="w-[15px] shrink-0 bg-[#50585f] text-[9px] leading-none text-[#9aa3a8]">
        ›
      </button>
    </div>
  );
}

function Ruler() {
  const marks = Array.from({ length: 24 }, (_, i) => 13 + i * 2);
  const sections = [
    { bar: 21, name: "chorus", tone: "bg-[#c07a80]" },
    { bar: 29, name: "verse", tone: "bg-[#3d4650]" },
    { bar: 45, name: "chorus", tone: "bg-[#3d4650]" },
  ];
  return (
    <div className={clsx(NARROW, "relative h-[29px] overflow-hidden bg-[#1b232d]")}>
      <div className="absolute inset-y-0 bg-[#a04d55]" style={{ left: barX(21), width: barX(29) - barX(21) }} />
      <span className="absolute top-[3px] left-0 text-[9px] leading-[13px] text-[#8f989f]">1</span>
      {marks.map((bar) => (
        <span
          key={bar}
          className={clsx(
            "absolute top-[3px] leading-[13px]",
            bar % 4 === 1 ? "text-[9px]" : "text-[8px]",
            bar > 20 && bar < 29 ? "text-[#e3bcc0]" : bar % 4 === 1 ? "text-[#a5aeb4]" : "text-[#77818a]",
          )}
          style={{ left: barX(bar) + 1 }}
        >
          {bar}
        </span>
      ))}
      {sections.map((section) => (
        <span
          key={section.bar}
          className={clsx(
            "absolute bottom-0 pr-2 pl-px text-[10px] leading-[13px] text-[#e2e7ea] [clip-path:polygon(0_0,80%_0,100%_100%,0_100%)]",
            section.tone,
          )}
          style={{ left: barX(section.bar) }}
        >
          {section.name}
        </span>
      ))}
      <svg viewBox="0 0 12 9" className="absolute top-px h-[9px] w-3" style={{ left: barX(22.56) - 6 }} aria-label="Playhead">
        <path d="M1 1h10v2L6 8 1 3z" fill="#b8e04a" stroke="#5a7a1a" />
      </svg>
    </div>
  );
}

function Arrangement() {
  return (
    <div className="flex min-w-0 flex-1 flex-col">
      <Minimap />
      <Ruler />
      <div className="relative flex flex-1 flex-col overflow-hidden">
        <Grid />
        <svg className="relative h-[13px] w-full shrink-0 border-b border-[#121922] bg-[#1f2731]" shapeRendering="crispEdges" aria-hidden>
          {Array.from({ length: 400 }, (_, i) => (
            <rect key={i} x={barX(FIRST_BAR + i / 4)} y={i % 4 ? 9 : 6} width="1" height="5" fill="#343d47" />
          ))}
        </svg>
        <div className="relative flex h-[528px] shrink-0 flex-col">
          {TRACKS.map((track) => (
            <div key={track.id} className="relative flex-1 border-b border-[#0f151e]">
              {track.clips.map((item) => (
                <Clip key={item.from} clip={item} muted={!track.on} />
              ))}
            </div>
          ))}
        </div>
        <div
          className="absolute inset-y-0 w-2.5 bg-[linear-gradient(90deg,transparent,#5c851270_40%,#6a9a18a0_85%,#9fc44e_90%)]"
          style={{ left: barX(22.56) - 9 }}
        />
      </div>
    </div>
  );
}

function Recorder() {
  return (
    <section
      aria-label="Screen recorder"
      className="absolute right-[3px] bottom-[3px] w-[401px] overflow-hidden rounded-md border border-[#8d9496] bg-[#111213] font-['Open_Sans',sans-serif] text-[#c9cccd]"
    >
      <div className="flex h-4 items-center gap-[9px] bg-[linear-gradient(#c3c8c9,#a3a9ab)] px-[5px] text-[10px] text-[#34383a]">
        {["Capture", "Effects", "Tools", "Help"].map((item) => (
          <button key={item} type="button">
            {item}
          </button>
        ))}
        <button type="button" aria-label="Minimize recorder" className="ml-auto h-0.5 w-[5px] bg-[#34383a]" />
        <button type="button" aria-label="Close recorder">
          <X className="size-2.5" strokeWidth={4} />
        </button>
      </div>
      <div className="flex gap-1.5 px-2 pt-1.5 pb-2 text-[9px] leading-3">
        <div className="w-[164px] rounded-sm border border-[#2a2c2d] bg-[#17191a] px-1 pt-0.5 pb-1.5">
          <p className="text-center">Duration</p>
          <output className="mt-1.5 block rounded-[5px] border border-[#6a6d6f] bg-[linear-gradient(#5d6062,#36383a_50%,#5a5d5f)] text-center text-[35px] leading-[37px] text-white">
            0:03:52
          </output>
        </div>
        <label className="w-[92px] rounded-sm border border-[#2a2c2d] bg-[#17191a] pt-0.5 pb-1.5 text-center">
          Audio
          <span className="relative mt-3.5 ml-[14px] block h-[22px] w-16">
            <svg viewBox="0 0 64 22" className="absolute inset-0" aria-hidden>
              <path d="M1 0v15M31 0v15M60 2v8" stroke="#7b7f81" />
              <path d="M0 12L60 5V18H0z" fill="#e4e6e7" />
              <path d="M0 11L60 4v3L0 14z" fill="#9b9fa1" />
            </svg>
            <input
              type="range"
              defaultValue={100}
              className="absolute top-[7px] left-0 h-3.5 w-16 appearance-none bg-transparent [&::-webkit-slider-thumb]:h-3.5 [&::-webkit-slider-thumb]:w-2 [&::-webkit-slider-thumb]:appearance-none [&::-webkit-slider-thumb]:rounded-t-full [&::-webkit-slider-thumb]:bg-[#8fd0f2]"
            />
          </span>
        </label>
        <div className="flex flex-1 items-end justify-between px-0.5 pb-2">
          <button type="button" className="flex flex-col items-center gap-1">
            <svg viewBox="0 0 30 30" className="size-[30px]" fill="none" aria-hidden>
              <path d="M8 7a11 11 0 1 1-4 8" stroke="#8e9294" strokeWidth="6" />
              <path d="M0 6l14 2-9 12z" fill="#a6aaac" />
            </svg>
            Delete
          </button>
          <button type="button" className="flex flex-col items-center gap-1">
            <span className="flex gap-[7px]">
              <span className="h-[30px] w-1.5 bg-[linear-gradient(#8e9294,#6f7375)]" />
              <span className="h-[30px] w-1.5 bg-[linear-gradient(#8e9294,#6f7375)]" />
            </span>
            Pause
          </button>
          <button type="button" className="flex flex-col items-center gap-1">
            <span className="size-[30px] rounded-sm bg-[linear-gradient(#a0a4a6,#6d7173)]" />
            Stop
          </button>
        </div>
      </div>
    </section>
  );
}

function FruitIcon({ ring }: { ring?: boolean }) {
  return (
    <svg viewBox="0 0 20 20" className="size-5" aria-hidden>
      {ring && <circle cx="10" cy="10" r="9" fill="#4a4340" />}
      <path d="M6 8c0-3 9-3 9 0 1 4-2 10-5 11-3-1-5-7-4-11z" fill={ring ? "#ef7d1e" : "#f3b73a"} />
      <path d="M8 8c2 1 2 6 1 9-2-2-3-7-1-9z" fill="#fbd98a" />
      <path d="M5 7c0-3 3-5 5-5s5 1 6 4l-3-1v2l-3-2-3 2V5z" fill="#5b7e2e" />
    </svg>
  );
}

interface TaskItem {
  label: string;
  open?: boolean;
  active?: boolean;
  icon: ReactNode;
}

const TASKS: TaskItem[] = [
  { label: "Start", icon: <path d="M3 5l6-1v6H3zM10 4l7-1v7h-7zM3 11h6v6l-6-1zM10 11h7v7l-7-1z" fill="#fff" /> },
  { label: "Task view", icon: <path d="M4 4h9M4 4v2M13 4v2M4 8h9v5H4zM4 17h9M4 15v2M13 15v2M16 3v5M16 10v7" stroke="#e5dedb" fill="none" /> },
  {
    label: "Racing game",
    icon: (
      <>
        <path d="M8 8l5-7 3 2-2 5-4 4-5-1z" fill="#e02222" />
        <path d="M1 11l6-1 4 3 8-2-2 5-9 2-6-3z" fill="#17100f" />
        <path d="M5 13l8-4-2 6z" fill="#c81c1c" />
        <path d="M2 12l3-1v3z" fill="#6c6664" />
      </>
    ),
  },
  { label: "FL Studio", icon: <FruitIcon /> },
  { label: "FL Studio 20", icon: <FruitIcon ring /> },
  {
    label: "Cubase",
    icon: (
      <>
        <path d="M11 1l5 3-6 6 6 6-4 3-9-9z" fill="#8e2f3c" />
        <path d="M12 8l5 4-4 3-4-4z" fill="#b85a63" />
      </>
    ),
  },
  {
    label: "Remote desktop",
    icon: (
      <>
        <path d="M6 3l12 2v9L8 12z" fill="#3a9be0" />
        <path d="M1 14l7-2 9 4-6 3z" fill="#dfe7ee" />
      </>
    ),
  },
  {
    label: "Studio One",
    icon: (
      <>
        <circle cx="10" cy="10" r="7.500" fill="#f0b429" />
        <circle cx="10" cy="10" r="6" fill="#2a1a10" />
        <path d="M10 5l5 8H5zM10 9l-2 2.500h4z" fill="#f0b429" fillRule="evenodd" />
      </>
    ),
  },
  {
    label: "Paint tool",
    icon: (
      <>
        <path d="M1 3h17v14H1z" fill="#8090c0" />
        <path d="M2 5l8 3 8-6-3 7 3 3-6 1-1 4-4-3-5-1 3-3z" fill="#c9d3ee" />
        <path d="M6 7l7-2 4-3-3 6-6 2zM8 12l6 1-3 3z" fill="#181b2a" />
      </>
    ),
  },
  {
    label: "File Explorer",
    open: true,
    icon: (
      <>
        <path d="M2 3h6l2 2h8v12H2z" fill="#f3ce63" />
        <path d="M4 9h12v8h-3v-4H7v4H4z" fill="#54b6c4" />
        <path d="M3 6h14v3H3z" fill="#fbe7a5" />
      </>
    ),
  },
  {
    label: "Firefox",
    icon: (
      <>
        <path d="M3 4l3 2c2-2 4-1 5-5 3 3 8 5 8 10a9 9 0 0 1-18 0c0-3 1-5 2-7z" fill="#ff8a1f" />
        <path d="M11 1c3 3 8 5 8 10l-3-3c-2-2-4-3-5-7z" fill="#ffd23c" />
        <circle cx="10" cy="11" r="4" fill="#7a3fd0" />
        <path d="M2 13c3 4 10 5 14 1-2 6-12 7-14-1z" fill="#f0285a" />
      </>
    ),
  },
  {
    label: "Photoshop",
    icon: (
      <>
        <rect x="2" y="2" width="16" height="16" fill="#0c2a3c" stroke="#3fb0d8" />
        <text x="10" y="14" textAnchor="middle" fontSize="10" fontFamily="Open Sans, sans-serif" fill="#4fc3ea">
          Ps
        </text>
      </>
    ),
  },
  {
    label: "Media player",
    icon: (
      <>
        <path d="M2 4h14l2 2v12H3z" fill="#a9c3d8" />
        <path d="M3 5h12v12H4z" fill="#e6d9cc" />
        <circle cx="9" cy="11" r="5" fill="#f0904a" />
        <path d="M7 8l5 3-5 3z" fill="#fff" />
      </>
    ),
  },
  {
    label: "Notepad++",
    open: true,
    icon: (
      <>
        <path d="M1 4l15-3 3 13-16 3z" fill="#a8bd6a" />
        <path d="M2 5l14-3 1 5-14 5z" fill="#cbd894" />
      </>
    ),
  },
  {
    label: "VLC",
    open: true,
    icon: (
      <>
        <path d="M9 2h3l5 12H4z" fill="#f08a24" />
        <path d="M8 6h5l1 3H7zM5 12h11l1 2H4z" fill="#f4eee8" />
        <path d="M2 15h17l-1 4H3z" fill="#f59a35" />
      </>
    ),
  },
  { label: "FL Studio project", open: true, active: true, icon: <FruitIcon ring /> },
  {
    label: "System tools",
    icon: (
      <>
        <path d="M6 2l12 1-1 12-10-1z" fill="#3c62d0" />
        <path d="M1 5h13v6H1z" fill="#c8d8f5" />
        <path d="M3 7h9M3 9h7" stroke="#3c62d0" />
        <path d="M8 15l8 1-3 3H8z" fill="#d3dce8" />
      </>
    ),
  },
  {
    label: "Camtasia",
    open: true,
    icon: (
      <>
        <path d="M4 2h6l2 5-2 2v9H8l-1-7-2 7H4l1-9-2-3z" fill="#57514f" />
        <circle cx="8" cy="4" r="2.500" fill="#8d8886" />
        <path d="M11 8h7v7h-7z" fill="#8fae54" />
      </>
    ),
  },
];

function Taskbar() {
  return (
    <footer className="flex h-8 items-center bg-[linear-gradient(90deg,#35140b_0_480px,#15100f_520px_700px,#33150b_760px)] text-[#f0e6e2]">
      <div className="flex h-full w-[705px] shrink-0">
        {TASKS.map((task) => (
          <button
            key={task.label}
            type="button"
            aria-label={task.label}
            className={clsx("relative flex flex-1 items-center justify-center", task.active && "bg-[#45413f]")}
          >
            <svg viewBox="0 0 20 20" className="size-5">
              {task.icon}
            </svg>
            {task.open && <span className={clsx("absolute bottom-0 h-0.5 bg-[#76c7cf]", task.active ? "inset-x-0" : "inset-x-1")} />}
          </button>
        ))}
      </div>
      <div className="mr-[19px] ml-auto flex items-center">
        <svg viewBox="0 0 12 12" className="size-3" fill="none" stroke="currentColor" aria-hidden>
          <circle cx="8" cy="2.500" r="2" />
          <circle cx="3.500" cy="6" r="1.500" />
          <path d="M1 12c0-5 5-5 5 0M6 7c2-3 5-2 5 2" />
        </svg>
        <ChevronUp className="ml-[15px] size-4" />
        <svg viewBox="0 0 20 12" className="ml-1.5 h-3 w-[19px]" fill="none" stroke="currentColor" aria-hidden>
          <path d="M.5.5h19v11H.5z" />
          <path d="M3 3.500h14M3 6h14M5 9h10" strokeDasharray="2 1" />
        </svg>
        <time className="ml-1 w-[47px] text-center font-['Open_Sans',sans-serif] text-[10px] leading-[14px] whitespace-nowrap">
          10:36 AM
          <br />
          2/6/2025
        </time>
        <svg viewBox="0 0 14 14" className="ml-3 size-3.5" fill="none" stroke="currentColor" aria-hidden>
          <path d="M1 1.500h12v9H8l-2 2.500v-2.500H1z" />
          <circle cx="12" cy="10" r="1.500" fill="currentColor" />
        </svg>
      </div>
    </footer>
  );
}

export default function App() {
  return (
    <div className="flex min-h-screen w-full flex-col overflow-x-clip border-l border-black bg-[#3d464b]">
      <header className="h-[65px] bg-[#535b62]">
        <TransportRow />
        <PanelRow />
      </header>
      <main className="relative flex flex-1 flex-col">
        <PlaylistTitle />
        <div className="flex flex-1">
          <div className="w-1.5 shrink-0 border-r border-[#2b3336] bg-[#414c4f]" />
          <PatternPicker />
          <div className="w-[3px] shrink-0 bg-[#323a3e]" />
          <TrackHeaders />
          <Arrangement />
          <div className="flex w-4 shrink-0 flex-col bg-[#3a4443]">
            <button type="button" aria-label="Playlist options" className="flex h-4 items-center justify-center bg-[#50585f]">
              <span className="size-[3px] bg-[#252b30]" />
            </button>
            <button type="button" aria-label="Scroll tracks up" className="flex h-4 items-center justify-center bg-[#4a5258] text-[#2b3238]">
              <ChevronUp className="size-3" />
            </button>
            <div className="mt-1.5 h-[26px] bg-[#566063]" />
          </div>
        </div>
        <svg viewBox="0 0 14 16" className="absolute top-[280px] left-[206px] h-4 w-3.5" aria-hidden>
          <path d="M1 1l5 2 5 2 2 9-1 1-3-1-5-3-1-2h3L1 5z" fill="#f4f6f7" stroke="#20262b" />
        </svg>
        <Recorder />
      </main>
      <Taskbar />
    </div>
  );
}
